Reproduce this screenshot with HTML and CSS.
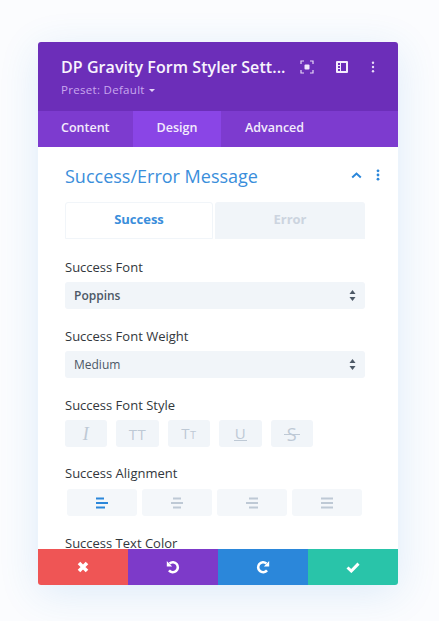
FILE: index.html
```html
<!DOCTYPE html>
<html>
<head>
  <meta charset="UTF-8">
  <title>Module Settings</title>
  <link rel="stylesheet" href="styles.css">
</head>

<body>
  <div class="modal">
    <div class="head">
      <div class="head-text">
        <h1>DP Gravity Form Styler Sett...</h1>
        <p>Preset: Default <span class="caret"></span></p>
      </div>
      <div class="head-icons">
        <svg width="14" height="14" viewBox="0 0 14 14"><path d="M1 4V1h3M10 1h3v3M13 10v3h-3M4 13H1v-3" fill="none" stroke="#e6d8f7" stroke-width="1.2"/><rect x="4.5" y="4.5" width="5" height="5" rx="1" fill="#f0e6fb"/></svg>
        <svg width="12" height="12" viewBox="0 0 12 12"><path fill-rule="evenodd" d="M1 0h10a1 1 0 0 1 1 1v10a1 1 0 0 1-1 1H1a1 1 0 0 1-1-1V1a1 1 0 0 1 1-1zM5 2v8h5V2zM2 2v2h2V2zM2 5v2h2V5zM2 8v2h2V8z" fill="#f4edfc"/></svg>
        <svg width="4" height="12" viewBox="0 0 4 12"><circle cx="2" cy="1.8" r="1.2" fill="#e8dcf8"/><circle cx="2" cy="6" r="1.2" fill="#e8dcf8"/><circle cx="2" cy="10.2" r="1.2" fill="#e8dcf8"/></svg>
      </div>
    </div>

    <div class="tabs">
      <div class="tab">Content</div>
      <div class="tab active">Design</div>
      <div class="tab">Advanced</div>
    </div>

    <div class="body">
      <div class="section-head">
        <h2>Success/Error Message</h2>
        <svg class="chev" width="11" height="7" viewBox="0 0 11 7"><path d="M1.2 5.6 5.5 1.6l4.3 4" fill="none" stroke="#2b87da" stroke-width="2"/></svg>
        <svg width="4" height="12" viewBox="0 0 4 12"><circle cx="2" cy="1.8" r="1.4" fill="#2b87da"/><circle cx="2" cy="6" r="1.4" fill="#2b87da"/><circle cx="2" cy="10.2" r="1.4" fill="#2b87da"/></svg>
      </div>

      <div class="switch">
        <div class="switch-item on">Success</div>
        <div class="switch-item">Error</div>
      </div>

      <label class="first">Success Font</label>
      <div class="select bold">Poppins
        <svg width="7" height="11" viewBox="0 0 7 11"><path d="M3.5 0 6.5 4H.5zM3.5 11 .5 7h6z" fill="#4c5866"/></svg>
      </div>

      <label>Success Font Weight</label>
      <div class="select">Medium
        <svg width="7" height="11" viewBox="0 0 7 11"><path d="M3.5 0 6.5 4H.5zM3.5 11 .5 7h6z" fill="#4c5866"/></svg>
      </div>

      <label>Success Font Style</label>
      <div class="styles">
        <div class="style-btn w42"><span class="glyph italic">I</span></div>
        <div class="style-btn w43"><span class="glyph">TT</span></div>
        <div class="style-btn w42"><span class="glyph">T<small>T</small></span></div>
        <div class="style-btn w43"><span class="glyph under">U</span></div>
        <div class="style-btn w42"><span class="glyph strike">S</span></div>
      </div>

      <label class="align-label">Success Alignment</label>
      <div class="aligns">
        <div class="align-btn"><svg width="14" height="12" viewBox="0 0 14 12"><path d="M1 1.5h8M1 6h12M1 10.5h9" stroke="#2b87da" stroke-width="2"/></svg></div>
        <div class="align-btn"><svg width="14" height="12" viewBox="0 0 14 12"><path d="M3 1.5h8M1 6h12M3 10.5h8" stroke="#bec9d5" stroke-width="2"/></svg></div>
        <div class="align-btn"><svg width="14" height="12" viewBox="0 0 14 12"><path d="M4 1.5h9M1 6h12M4 10.5h9" stroke="#bec9d5" stroke-width="2"/></svg></div>
        <div class="align-btn"><svg width="14" height="12" viewBox="0 0 14 12"><path d="M1 1.5h12M1 6h12M1 10.5h12" stroke="#bec9d5" stroke-width="2"/></svg></div>
      </div>

      <label class="last">Success Text Color</label>
    </div>

    <div class="foot">
      <div class="foot-btn red"><svg width="12" height="12" viewBox="0 0 12 12"><path d="M2 2l8 8M10 2l-8 8" stroke="#fff" stroke-width="3.6"/></svg></div>
      <div class="foot-btn purple"><svg width="14" height="14" viewBox="0 0 14 14"><path d="M3.6 3.4A5 5 0 1 1 3 10.4" fill="none" stroke="#fff" stroke-width="2.6"/><path d="M0.8 1v5.4h5.4z" fill="#fff"/></svg></div>
      <div class="foot-btn blue"><svg width="14" height="14" viewBox="0 0 14 14"><path d="M10.4 3.4A5 5 0 1 0 11 10.4" fill="none" stroke="#fff" stroke-width="2.6"/><path d="M13.2 1v5.4H7.8z" fill="#fff"/></svg></div>
      <div class="foot-btn green"><svg width="14" height="11" viewBox="0 0 14 11"><path d="M1.5 5.5l3.8 3.5 7.2-7.4" fill="none" stroke="#fff" stroke-width="3"/></svg></div>
    </div>
  </div>
</body>
</html>
```

FILE: styles.css
```css
* {
  box-sizing: border-box;
}
html, body {
  margin: 0;
  padding: 0;
  height: 621px;
  overflow: hidden;
}
body {
  background: #fbfcfe;
  font-family: "Open Sans", "Liberation Sans", sans-serif;
  padding: 42px 41px 36px 38px;
}
.modal {
  height: 543px;
  display: flex;
  flex-direction: column;
  border-radius: 3px;
  overflow: hidden;
  background: #fff;
  box-shadow: 0 8px 40px rgba(43, 135, 218, 0.14);
}

/* purple header */
.head {
  height: 69px;
  flex: none;
  background: #6c2eb9;
  display: flex;
  padding: 14px 23px 0 23px;
}
.head-text {
  flex: 1;
}
.head h1 {
  margin: 0;
  font-size: 16px;
  line-height: 22px;
  font-weight: 600;
  letter-spacing: 0.07px;
  color: #f8f4fd;
  white-space: nowrap;
}
.head p {
  margin: 5px 0 0;
  font-size: 11.5px;
  line-height: 14px;
  color: #c9a8ee;
  letter-spacing: 0.3px;
}
.caret {
  display: inline-block;
  margin-left: 1px;
  vertical-align: 2px;
  border: 3px solid transparent;
  border-top-color: #e3d3f7;
  border-bottom: 0;
}
.head-icons {
  display: flex;
  align-items: center;
  height: 22px;
}
.head-icons svg:nth-child(1) {
  margin-right: 22px;
}
.head-icons svg:nth-child(2) {
  margin-right: 23px;
}

.tabs {
  height: 36px;
  flex: none;
  display: flex;
  background: #7d3bcf;
}
.tab {
  font-size: 12.5px;
  font-weight: 600;
  line-height: 34px;
  color: #f3ebfc;
  padding: 0 24px;
  width: 95px;
}
.tab:first-child {
  padding: 0 23px;
}
.tab.active {
  width: 88px;
  background: #8a45e6;
  text-align: center;
  padding: 0;
}
.tab:last-child {
  width: auto;
}

/* settings area */
.body {
  flex: 1;
  padding: 0 33px 0 27px;
}
.section-head {
  display: flex;
  align-items: center;
  height: 26px;
  margin-top: 16px;
}
.section-head h2 {
  flex: 1;
  margin: 0;
  font-size: 18px;
  line-height: 26px;
  font-weight: 400;
  color: #3a8edb;
  white-space: nowrap;
}
.chev {
  margin-right: 14px;
  margin-top: -1px;
}
.section-head svg:last-child {
  margin-right: -15px;
  margin-top: -2px;
}
.switch {
  display: flex;
  gap: 2px;
  margin-top: 13px;
  height: 37px;
}
.switch-item {
  width: 150px;
  font-size: 13px;
  font-weight: 700;
  text-align: center;
  line-height: 34px;
  color: #ccd4df;
  background: #f1f5f9;
  border-radius: 3px 3px 0 0;
}
.switch-item.on {
  width: 148px;
  color: #3a8edb;
  background: #fff;
  border: 1px solid #f1f5f9;
  line-height: 32px;
}
label {
  display: block;
  font-size: 13px;
  font-weight: 500;
  line-height: 18px;
  color: #32373c;
  margin-top: 18px;
  margin-bottom: 6px;
}
label.first {
  margin-top: 19px;
}
.select {
  height: 27px;
  background: #f1f5f9;
  border-radius: 3px;
  padding: 0 9px;
  font-size: 12px;
  line-height: 27px;
  color: #4c5866;
  display: flex;
  justify-content: space-between;
  align-items: center;
}
.select.bold {
  font-weight: 600;
}
.styles {
  display: flex;
  gap: 9px;
}
.style-btn {
  height: 27px;
  background: #f1f5f9;
  border-radius: 3px;
  display: flex;
  align-items: center;
  justify-content: center;
}
.w42 {
  width: 42px;
}
.w43 {
  width: 43px;
}
.glyph {
  font-size: 15px;
  font-weight: 400;
  color: #bec9d5;
  line-height: 16px;
  letter-spacing: 0.5px;
}
.glyph small {
  font-size: 11px;
}
.italic {
  font-style: italic;
  font-family: "Liberation Serif", serif;
  font-size: 18px;
}
.under {
  border-bottom: 1.5px solid #bec9d5;
  line-height: 13px;
  padding: 0 1px;
}
.strike {
  position: relative;
  font-size: 18px;
}
.strike::after {
  content: "";
  position: absolute;
  left: -3px;
  right: -3px;
  top: 8px;
  height: 1.5px;
  background: #bec9d5;
}
label.align-label {
  margin-top: 17px;
  margin-bottom: 7px;
}
.aligns {
  display: flex;
  gap: 5px;
  padding: 0 3px 0 2px;
}
.align-btn {
  width: 70px;
  height: 27px;
  background: #f4f7fa;
  border-radius: 3px;
  display: flex;
  align-items: center;
  justify-content: center;
}
label.last {
  margin-top: 21px;
  margin-bottom: 0;
  line-height: 12px;
}

.foot {
  height: 36px;
  flex: none;
  display: flex;
}
.foot-btn {
  flex: 1;
  display: flex;
  align-items: center;
  justify-content: center;
}
.red {
  background: #ef5555;
}
.purple {
  background: #7d3ac9;
}
.blue {
  background: #2b87da;
}
.green {
  background: #29c4a9;
}
```
